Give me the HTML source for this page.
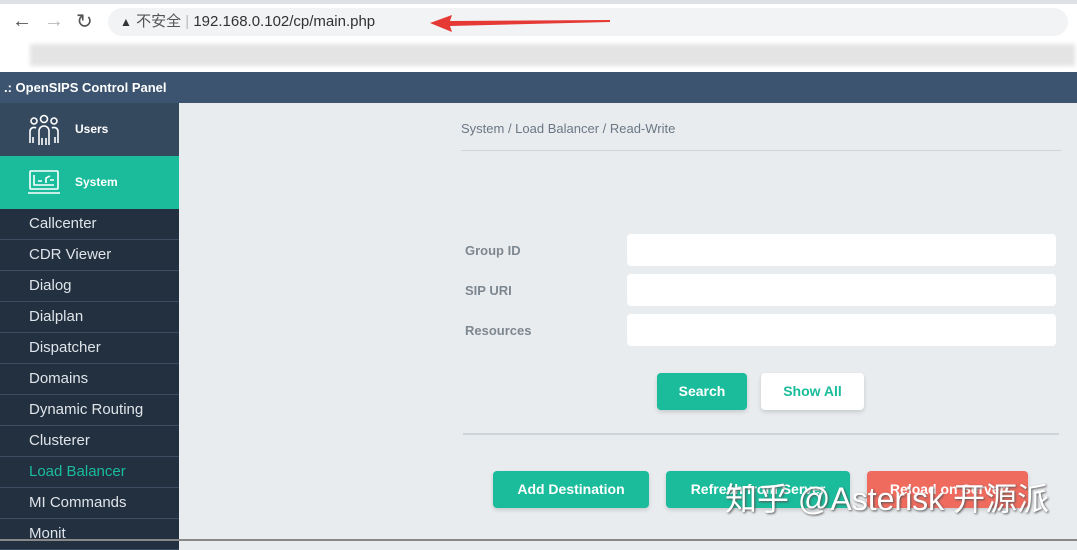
<!DOCTYPE html>
<html><head><meta charset="utf-8"><style>
*{margin:0;padding:0;box-sizing:border-box}
body{width:1077px;height:541px;overflow:hidden;font-family:"Liberation Sans","Noto Sans CJK SC",sans-serif;background:#e9ecef;position:relative}
.chrome{position:absolute;left:0;top:0;width:1077px;height:72px;background:#fff}
.topstrip{position:absolute;top:0;left:0;width:1077px;height:4px;background:#dee1e6}
.url{position:absolute;left:108px;top:8px;width:960px;height:28px;background:#f1f3f4;border-radius:14px;font-size:15px;color:#333;line-height:28px;padding-left:12px}
.bm{position:absolute;left:30px;top:44px;width:1045px;height:22px;background:#e4e4e4;filter:blur(2px)}
.hdr{position:absolute;left:0;top:72px;width:1077px;height:31px;background:#3c5470;color:#fff;font-size:13px;font-weight:bold;line-height:31px;padding-left:4px}
.side{position:absolute;left:0;top:103px;width:179px;height:438px;background:#2a3a4f}
.users{height:53px;background:#34495e;color:#fff;font-size:12px;font-weight:bold;line-height:53px;padding-left:75px;position:relative}
.sys{height:53px;background:#1abc9c;color:#fff;font-size:12px;font-weight:bold;line-height:53px;padding-left:75px;position:relative}
.item{height:31px;border-bottom:1px solid #3c4d62;color:#dfe4ea;font-size:15px;line-height:30px;padding-left:29px;background:#22303f}
.item.act{color:#1abc9c}
.ico{position:absolute;left:28px}
.bc{position:absolute;left:461px;top:121px;font-size:13px;color:#6b7785}
.line{position:absolute;left:461px;top:150px;width:600px;height:1px;background:#cfd4d9}
.lbl{position:absolute;left:465px;font-size:13px;font-weight:bold;color:#7d8790}
.inp{position:absolute;left:627px;width:429px;height:32px;background:#fff;border-radius:4px}
.btn{position:absolute;height:37px;border-radius:4px;color:#fff;font-weight:bold;font-size:14px;text-align:center;line-height:37px;box-shadow:0 2px 4px rgba(0,0,0,.15)}
.wm{position:absolute;left:725px;top:474px;font-size:32px;color:#fff;text-shadow:1px 1px 2px #555}
</style></head><body>
<div class="chrome"><div class="topstrip"></div>
<div style="position:absolute;left:12px;top:10px;font-size:20px;color:#555">←</div>
<div style="position:absolute;left:44px;top:10px;font-size:20px;color:#bbb">→</div>
<div style="position:absolute;left:76px;top:9px;font-size:20px;color:#555">↻</div>
<div class="url"><span style="font-size:12px">▲</span> <span style="color:#555">不安全</span> <span style="color:#bbb">|</span> 192.168.0.102/cp/main.php</div>
<svg style="position:absolute;left:430px;top:15px" width="190" height="18"><polygon points="0,8 22,0 20,6 180,5 180,7 20,11 22,17" fill="#e53935"/></svg>
<div class="bm"></div></div>
<div class="hdr">.: OpenSIPS Control Panel</div>
<div class="side">
<div class="users"><svg class="ico" style="top:11px" width="32" height="32" viewBox="0 0 32 32" fill="none" stroke="#fff" stroke-width="1.6"><circle cx="16" cy="5" r="3.5"/><circle cx="6" cy="7" r="3"/><circle cx="26" cy="7" r="3"/><path d="M11 31V17a5 5 0 0 1 10 0v14M14 31V24M18 31V24M2 29V17a4 4 0 0 1 6-3M30 29V17a4 4 0 0 0-6-3M5 29v-6M27 29v-6"/></svg>Users</div>
<div class="sys"><svg class="ico" style="top:13px" width="32" height="28" viewBox="0 0 32 28" fill="none" stroke="#fff" stroke-width="1.6"><rect x="2" y="2" width="28" height="18" rx="1"/><path d="M0 24h32M6 6v10h20M10 12h4M18 14v-5l4-2M22 11h4"/></svg>System</div>
<div class="item">Callcenter</div><div class="item">CDR Viewer</div><div class="item">Dialog</div><div class="item">Dialplan</div><div class="item">Dispatcher</div><div class="item">Domains</div><div class="item">Dynamic Routing</div><div class="item">Clusterer</div><div class="item act">Load Balancer</div><div class="item">MI Commands</div><div class="item">Monit</div>
</div>
<div class="bc">System / Load Balancer / Read-Write</div>
<div class="line"></div>
<div class="lbl" style="top:243px">Group ID</div><div class="inp" style="top:234px"></div>
<div class="lbl" style="top:283px">SIP URI</div><div class="inp" style="top:274px"></div>
<div class="lbl" style="top:323px">Resources</div><div class="inp" style="top:314px"></div>
<div class="btn" style="left:657px;top:373px;width:90px;background:#1abc9c">Search</div>
<div class="btn" style="left:761px;top:373px;width:103px;background:#fff;color:#1abc9c">Show All</div>
<div style="position:absolute;left:463px;top:433px;width:596px;height:2px;background:#cfd4d9"></div>
<div class="btn" style="left:493px;top:471px;width:156px;background:#1abc9c">Add Destination</div>
<div class="btn" style="left:666px;top:471px;width:184px;background:#1abc9c">Refresh from Server</div>
<div class="btn" style="left:867px;top:471px;width:161px;background:#ef6b5e">Reload on Server</div>
<div class="wm">知乎 @Asterisk 开源派</div>
<div style="position:absolute;left:0;top:539px;width:1077px;height:2px;background:#888"></div>
</body></html>
